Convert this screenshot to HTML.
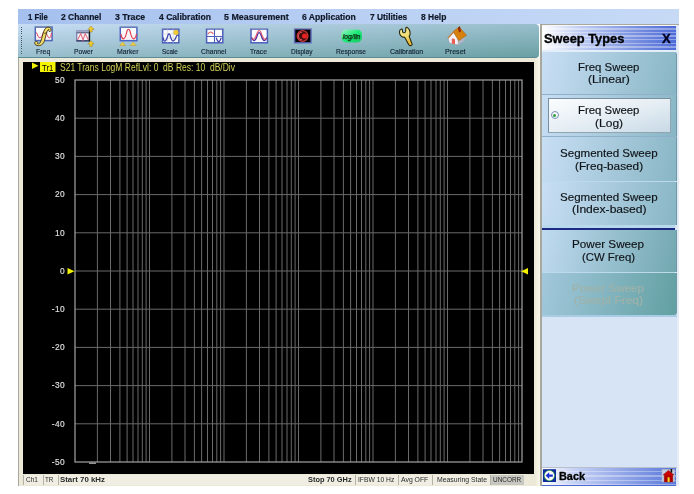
<!DOCTYPE html>
<html><head><meta charset="utf-8">
<style>
html,body{margin:0;padding:0;}
body{width:694px;height:494px;overflow:hidden;position:relative;background:#fff;font-family:"Liberation Sans",sans-serif;}
div{position:absolute;box-sizing:border-box;}
.t{white-space:nowrap;transform-origin:0 0;}
svg{position:absolute;left:0;top:0;}
</style></head><body>
<div style="left:18px;top:9px;width:661px;height:15px;background:linear-gradient(to right,#a5c0ee,#bcd2f4 60%,#c6daf6)"></div>
<div style="left:18px;top:24px;width:521px;height:34px;border-radius:0 4px 4px 0;background:linear-gradient(to bottom right,#c8ddf4,#6aa0a4);border-bottom:1px solid #5a8a94"></div>
<div style="left:20.5px;top:26.8px;width:1px;height:27px;background:repeating-linear-gradient(to bottom,#405868 0 1px,transparent 1px 2.15px)"></div>
<div style="left:18px;top:58px;width:523px;height:428px;background:#ece9d8;border-left:1px solid #a8a8a0"></div>
<div style="left:23px;top:62px;width:511px;height:412px;background:#000"></div>
<div style="left:23px;top:474px;width:511px;height:12px;background:#ece9d8"></div>
<!-- right panel -->
<div style="left:541px;top:24px;width:138px;height:462px;background:#d6e4f6"></div>
<div style="left:542px;top:26px;width:134px;height:25px;background:repeating-linear-gradient(to bottom,rgba(255,255,255,0) 0 2.2px,rgba(255,255,255,0.36) 2.2px 3.6px),linear-gradient(to right,#ffffff,#bccaf2 30%,#7890e0 70%,#4c6ad8)"></div>
<div style="left:536px;top:58px;width:4px;height:428px;background:linear-gradient(to right,#f0eddc,#f8f6ec)"></div>
<svg width="694" height="494" style="position:absolute;left:0;top:0">
<g stroke="#6a6a6a" stroke-width="1"><line x1="97.4" y1="80" x2="97.4" y2="462"/><line x1="110.5" y1="80" x2="110.5" y2="462"/><line x1="119.9" y1="80" x2="119.9" y2="462"/><line x1="127.1" y1="80" x2="127.1" y2="462"/><line x1="133.0" y1="80" x2="133.0" y2="462"/><line x1="138.0" y1="80" x2="138.0" y2="462"/><line x1="142.3" y1="80" x2="142.3" y2="462"/><line x1="146.1" y1="80" x2="146.1" y2="462"/><line x1="171.9" y1="80" x2="171.9" y2="462"/><line x1="185.0" y1="80" x2="185.0" y2="462"/><line x1="194.4" y1="80" x2="194.4" y2="462"/><line x1="201.6" y1="80" x2="201.6" y2="462"/><line x1="207.5" y1="80" x2="207.5" y2="462"/><line x1="212.5" y1="80" x2="212.5" y2="462"/><line x1="216.8" y1="80" x2="216.8" y2="462"/><line x1="220.6" y1="80" x2="220.6" y2="462"/><line x1="149.5" y1="80" x2="149.5" y2="462"/><line x1="246.4" y1="80" x2="246.4" y2="462"/><line x1="259.5" y1="80" x2="259.5" y2="462"/><line x1="268.9" y1="80" x2="268.9" y2="462"/><line x1="276.1" y1="80" x2="276.1" y2="462"/><line x1="282.0" y1="80" x2="282.0" y2="462"/><line x1="287.0" y1="80" x2="287.0" y2="462"/><line x1="291.3" y1="80" x2="291.3" y2="462"/><line x1="295.1" y1="80" x2="295.1" y2="462"/><line x1="224.0" y1="80" x2="224.0" y2="462"/><line x1="320.9" y1="80" x2="320.9" y2="462"/><line x1="334.0" y1="80" x2="334.0" y2="462"/><line x1="343.4" y1="80" x2="343.4" y2="462"/><line x1="350.6" y1="80" x2="350.6" y2="462"/><line x1="356.5" y1="80" x2="356.5" y2="462"/><line x1="361.5" y1="80" x2="361.5" y2="462"/><line x1="365.8" y1="80" x2="365.8" y2="462"/><line x1="369.6" y1="80" x2="369.6" y2="462"/><line x1="298.5" y1="80" x2="298.5" y2="462"/><line x1="395.4" y1="80" x2="395.4" y2="462"/><line x1="408.5" y1="80" x2="408.5" y2="462"/><line x1="417.9" y1="80" x2="417.9" y2="462"/><line x1="425.1" y1="80" x2="425.1" y2="462"/><line x1="431.0" y1="80" x2="431.0" y2="462"/><line x1="436.0" y1="80" x2="436.0" y2="462"/><line x1="440.3" y1="80" x2="440.3" y2="462"/><line x1="444.1" y1="80" x2="444.1" y2="462"/><line x1="373.0" y1="80" x2="373.0" y2="462"/><line x1="469.9" y1="80" x2="469.9" y2="462"/><line x1="483.0" y1="80" x2="483.0" y2="462"/><line x1="492.4" y1="80" x2="492.4" y2="462"/><line x1="499.6" y1="80" x2="499.6" y2="462"/><line x1="505.5" y1="80" x2="505.5" y2="462"/><line x1="510.5" y1="80" x2="510.5" y2="462"/><line x1="514.8" y1="80" x2="514.8" y2="462"/><line x1="518.6" y1="80" x2="518.6" y2="462"/><line x1="447.5" y1="80" x2="447.5" y2="462"/><line x1="75" y1="118.2" x2="522" y2="118.2"/><line x1="75" y1="156.4" x2="522" y2="156.4"/><line x1="75" y1="194.6" x2="522" y2="194.6"/><line x1="75" y1="232.8" x2="522" y2="232.8"/><line x1="75" y1="271.0" x2="522" y2="271.0"/><line x1="75" y1="309.2" x2="522" y2="309.2"/><line x1="75" y1="347.4" x2="522" y2="347.4"/><line x1="75" y1="385.6" x2="522" y2="385.6"/><line x1="75" y1="423.8" x2="522" y2="423.8"/></g>
<rect x="75" y="80" width="447" height="382" fill="none" stroke="#a4a4a4" stroke-width="1.2"/>
<line x1="89" y1="463.2" x2="96" y2="463.2" stroke="#9a9a9a" stroke-width="1.5"/>
<polygon points="67.5,268 74.5,271.2 67.5,274.5" fill="#f0f000"/>
<polygon points="528,268 521,271.2 528,274.5" fill="#f0f000"/>
<polygon points="32,62.5 38.5,65.7 32,69" fill="#f0f000"/>
<rect x="40" y="62" width="15.5" height="10" fill="#f4f400"/>
</svg>
<div style="left:540px;top:24px;width:2px;height:462px;background:#a9a89e"></div>
<div style="left:540px;top:23.8px;width:139px;height:1.5px;background:#a8a89c"></div>
<div style="left:542px;top:25.3px;width:135px;height:1px;background:#f4f6fa"></div>
<div style="left:677px;top:26px;width:2px;height:460px;background:#e6ecf6"></div>
<div style="left:542px;top:52px;width:135px;height:42px;border-radius:0 3px 0 0;border-right:1px solid #6d98a8;background:linear-gradient(102deg,#c8def4,#88b6c4)"></div>
<div style="left:542px;top:94px;width:133px;height:1px;background:#bcdaea"></div>
<div style="left:542px;top:95px;width:135px;height:41px;border-radius:0;border-right:1px solid #6d98a8;background:linear-gradient(102deg,#c8def4,#88b6c4)"></div>
<div style="left:542px;top:136px;width:133px;height:1px;background:#bcdaea"></div>
<div style="left:542px;top:137px;width:135px;height:44px;border-radius:0;border-right:1px solid #6d98a8;background:linear-gradient(102deg,#c8def4,#88b6c4)"></div>
<div style="left:542px;top:181px;width:133px;height:1px;background:#bcdaea"></div>
<div style="left:542px;top:182px;width:135px;height:43px;border-radius:0;border-right:1px solid #6d98a8;background:linear-gradient(102deg,#c8def4,#88b6c4)"></div>
<div style="left:542px;top:225px;width:133px;height:1px;background:#bcdaea"></div>
<div style="left:542px;top:230px;width:135px;height:42px;border-radius:0;border-right:1px solid #6d98a8;background:linear-gradient(102deg,#c0daf0,#72a8b0)"></div>
<div style="left:542px;top:272px;width:133px;height:1px;background:#bcdaea"></div>
<div style="left:542px;top:273px;width:135px;height:42px;border-radius:0 0 3px 0;border-right:1px solid #6d98a8;background:linear-gradient(102deg,#a2c8dc,#62a0a2)"></div>
<div style="left:542px;top:315px;width:133px;height:1px;background:#bcdaea"></div>
<div style="left:542px;top:94px;width:135px;height:1px;background:#8eb0c8"></div>
<div style="left:542px;top:136px;width:135px;height:1px;background:#8eb0c8"></div>
<div style="left:548px;top:98px;width:123px;height:35px;border:1px solid #90a4b2;border-top-color:#7a90a0;border-left-color:#7a90a0;background:linear-gradient(to bottom right,#fbfdff,#e6eef4 50%,#c8dae6)"></div>
<div style="left:550.6px;top:111.1px;width:8px;height:8px;border-radius:50%;border:1px solid #7890b0;background:#f4f8fc"></div>
<div style="left:553.1px;top:113.6px;width:3px;height:3px;border-radius:50%;background:#30a040"></div>
<div style="left:542px;top:225px;width:133px;height:3px;background:#b8d8ec"></div>
<div style="left:542px;top:228px;width:133px;height:2px;background:#1c2a84"></div>
<div style="left:542px;top:315px;width:135px;height:2px;background:#a8cce4"></div>
<div style="left:542px;top:50px;width:135px;height:2px;background:#e4eef8"></div>
<div style="left:542px;top:466.6px;width:135px;height:1px;background:#b8c0cc"></div>
<div style="left:542px;top:467.5px;width:134px;height:18px;background:repeating-linear-gradient(to bottom,rgba(255,255,255,0) 0 2.9px,rgba(255,255,255,0.34) 2.9px 4.3px),linear-gradient(to right,#ffffff,#c4d0f4 25%,#5a78da);border-bottom:1px solid #4a68d0"></div>
<div style="left:23px;top:475px;width:20px;height:10px;background:#f0eee2;border-left:1px solid #b4b2a2"></div>
<div style="left:43px;top:475px;width:15px;height:10px;background:#f0eee2;border-left:1px solid #b4b2a2"></div>
<div style="left:58px;top:475px;width:297px;height:10px;background:#f0eee2;border-left:1px solid #b4b2a2"></div>
<div style="left:355px;top:475px;width:43px;height:10px;background:#f0eee2;border-left:1px solid #b4b2a2"></div>
<div style="left:398px;top:475px;width:34px;height:10px;background:#f0eee2;border-left:1px solid #b4b2a2"></div>
<div style="left:432px;top:475px;width:58px;height:10px;background:#f0eee2;border-left:1px solid #b4b2a2"></div>
<div style="left:490px;top:475px;width:34px;height:10px;background:#c8c8c2;border-left:1px solid #b4b2a2"></div>
<svg width="694" height="494" style="position:absolute;left:0;top:0">
<defs>
<linearGradient id="boxg" x1="0" y1="0" x2="0" y2="1"><stop offset="0" stop-color="#ffffff"/><stop offset="1" stop-color="#f4eef4"/></linearGradient>
<linearGradient id="grn" x1="0" y1="0" x2="1" y2="1"><stop offset="0" stop-color="#9cf4c4"/><stop offset="0.5" stop-color="#1ee878"/><stop offset="1" stop-color="#18c860"/></linearGradient>
<radialGradient id="disp" cx="0.5" cy="0.5" r="0.5"><stop offset="0" stop-color="#f02020"/><stop offset="1" stop-color="#a01010"/></radialGradient>
<linearGradient id="wr" x1="0" y1="0" x2="0.4" y2="1"><stop offset="0" stop-color="#f8f0a8"/><stop offset="0.6" stop-color="#f0dc70"/><stop offset="1" stop-color="#e8b838"/></linearGradient>
</defs>
<!-- Freq -->
<rect x="35.3" y="27.1" width="16.8" height="13.5" fill="url(#boxg)" stroke="#5068b8" stroke-width="1.5"/>
<line x1="35.3" y1="27" x2="52" y2="27" stroke="#8090b0" stroke-width="1"/>
<path d="M36.5,32.5 Q38,38 40,38 Q42,38 43.5,32 M46,33 Q48,38 49.5,38 Q51,38 51.5,33" fill="none" stroke="#e04858" stroke-width="1"/>
<path d="M51,29.4 C50.8,27 47.2,26.2 45.2,28.6 C44,30 43.2,33 42.2,36.5 C41.4,39.5 40.8,42.2 39.5,43.4 C38.7,44 37.6,44 37.3,43.3 C38.2,42.8 37.8,41.2 36.2,41.3 C34.2,41.5 34,44.8 37,45.5 C40.6,46.3 43.6,44.2 44.6,40.4 C45.4,37.4 46.2,33.6 47.2,31.2 C47.8,29.8 48.6,29.2 49,29.6 C48.3,30.2 48.6,31.8 49.9,31.6 C50.8,31.4 51.1,30.4 51,29.4 Z" fill="#f2dc6a" stroke="#3a3010" stroke-width="0.9" stroke-linejoin="round"/>
<path d="M44.2,33.2 L47.2,33" stroke="#3a3010" stroke-width="0.8"/>
<!-- Power -->
<rect x="76.8" y="31" width="12.4" height="9.8" fill="#fbf6fb" stroke="#6a70a0" stroke-width="1.1"/>
<rect x="76.4" y="30.5" width="13" height="1.6" fill="#a0a8c8"/>
<rect x="76.4" y="32" width="13" height="1.4" fill="#687090"/>
<rect x="76.4" y="40.2" width="13" height="1.3" fill="#303860"/>
<path d="M77.6,40 L80.8,33.6 L83,40 L85.2,33.6 L88.4,40" fill="none" stroke="#e07080" stroke-width="1.1"/>
<line x1="89.5" y1="30.5" x2="89.5" y2="41.5" stroke="#101010" stroke-width="1.3"/>
<path d="M91,26 L94.2,29.5 L92.2,29.5 L92.2,32 L89.8,32 L89.8,29.5 L87.8,29.5 Z" fill="#f0cc30" stroke="#907010" stroke-width="0.4"/>
<path d="M91,40.8 L94.2,44 L92.2,44 L92.2,46.5 L89.8,46.5 L89.8,44 L87.8,44 Z" fill="#f0cc30" stroke="#907010" stroke-width="0.4"/>
<!-- Marker -->
<rect x="120.3" y="27.3" width="16.6" height="13.4" fill="url(#boxg)" stroke="#4a64c4" stroke-width="1.5"/>
<line x1="120" y1="27" x2="137" y2="27" stroke="#8898b8" stroke-width="1"/>
<path d="M120.8,34 Q122,39 123.5,38.8 Q125.5,38.5 127,31 Q128.3,27.5 130,31 Q131.5,38.5 133.5,38.8 Q135.5,39 136.5,34" fill="none" stroke="#e03848" stroke-width="1.2"/>
<path d="M119.6,45.6 L122.6,42 L125.6,45.6 Z M130.2,45.6 L133.2,42 L136.2,45.6 Z" fill="#f0d040" stroke="#b09020" stroke-width="0.4"/>
<!-- Scale -->
<rect x="162.6" y="29.3" width="16.2" height="13.5" fill="#fbfbff" stroke="#4a60bc" stroke-width="1.5"/>
<line x1="162" y1="28.8" x2="179.4" y2="28.8" stroke="#8898c0" stroke-width="1"/>
<path d="M167.6,29.5 V42.5 M173.2,29.5 V42.5 M162.8,33.8 H178.6 M162.8,38.2 H178.6" stroke="#d4d8e4" stroke-width="0.8"/>
<path d="M163,37.5 Q164,41.5 165,41.2 Q166.5,40.5 168,35 Q169,32.8 170,35 Q171.5,41 173,41 Q174.8,41 176.5,36 Q177.5,34 178.6,36" fill="none" stroke="#3a44a8" stroke-width="1.2"/>
<circle cx="176" cy="32.4" r="2.4" fill="#f2cc30" stroke="#c8a830" stroke-width="0.5"/>
<!-- Channel -->
<rect x="206.6" y="29" width="16.2" height="13.8" fill="#fdfdff" stroke="#4a60bc" stroke-width="1.5"/>
<line x1="206" y1="28.5" x2="223.4" y2="28.5" stroke="#8898c0" stroke-width="1"/>
<path d="M214.5,29 V42.8 M206.6,36.5 H222.8" stroke="#4a60bc" stroke-width="1.1"/>
<path d="M207.8,34.2 Q210.5,29.8 213.4,34" fill="none" stroke="#e05a5a" stroke-width="1.1"/>
<path d="M216.3,37.6 Q217.2,41.6 218.7,41.6 Q220.2,41.6 221.2,37.6" fill="none" stroke="#4040a8" stroke-width="1.2"/>
<!-- Trace -->
<rect x="251" y="29" width="16.4" height="13.8" fill="#fdfcff" stroke="#4a60bc" stroke-width="1.5"/>
<line x1="250.4" y1="28.5" x2="268" y2="28.5" stroke="#8898c0" stroke-width="1"/>
<path d="M251.6,37.4 Q253.2,41.2 254.6,40.4 Q256.4,39 257.6,34.5 Q259.2,30.8 260.8,34.5 Q262,39 263.8,40.4 Q265.2,41.2 266.8,37.4" fill="none" stroke="#5030a0" stroke-width="1.3"/>
<path d="M252,38.2 Q253.2,39.8 254.6,38.6 Q256.2,36 257.4,32.4 Q259.2,28.6 261,32.4 Q262.2,36 263.8,38.6 Q265.2,39.8 266.4,38.2" fill="none" stroke="#e05868" stroke-width="1.1"/>
<!-- Display -->
<rect x="294.6" y="29" width="16.4" height="13.8" fill="#000" stroke="#5a68b8" stroke-width="1.4"/>
<line x1="294" y1="28.5" x2="311.6" y2="28.5" stroke="#8890b8" stroke-width="1"/>
<circle cx="302.6" cy="36" r="5.4" fill="#401010" stroke="#c83838" stroke-width="1.3"/>
<path d="M302.2,32.2 A3.8,3.8 0 1 0 302.2,39.8" fill="none" stroke="#e05050" stroke-width="1.1"/>
<circle cx="304.6" cy="36" r="2.6" fill="#e82020"/>
<!-- Response -->
<rect x="341.4" y="29.6" width="20.6" height="12.8" rx="5" ry="5" fill="url(#grn)"/>
<text x="351.6" y="39" font-family="Liberation Sans" font-size="6.6" font-style="italic" fill="#082808" stroke="#082808" stroke-width="0.25" text-anchor="middle" textLength="17.5" lengthAdjust="spacingAndGlyphs">log/lin</text>
<!-- Calibration wrench -->
<path d="M400.6,29.4 C399.2,30 399,33.5 400.6,35.6 C401.6,36.8 403.4,37.4 404.8,37.4 L408.6,44.6 C409.4,46 411.6,46 412.2,44.4 L409.2,36.4 C410.6,34.6 410.8,30.6 407.6,27.6 C406.8,27 406,27.4 405.8,28.2 L405.6,31.4 C405.2,33 403.4,33.2 402.6,32 L402.4,29.8 C402.2,29 401.4,28.9 400.6,29.4 Z" fill="url(#wr)" stroke="#2a2810" stroke-width="1.1" stroke-linejoin="round"/>
<!-- Preset house -->
<path d="M448,37.6 L453.2,32 L458.2,38 L458,45 L449.4,43 Z" fill="#f4f2fa" stroke="#9090a0" stroke-width="0.5"/>
<path d="M458.2,38.5 L464.6,35.8 L464.2,41.2 L458,45 Z" fill="#b0b4c0"/>
<path d="M453.2,31.5 L459.2,27 L466.6,35.2 L458.6,40.8 Z" fill="#d8800c" stroke="#a05808" stroke-width="0.5"/>
<path d="M447.5,37.8 L453.2,31.5 L454,32.5 L448.5,38.5 Z" fill="#c8782a"/>
<path d="M457.8,27.6 L460,26.2 L461,31.5 L459,32.6 Z" fill="#902808"/>
<path d="M451.8,38.2 L455,39.2 L455,44.2 L451.8,43.4 Z" fill="#e86050"/>
<!-- Back icon -->
<rect x="542.9" y="469.2" width="13.1" height="12.8" fill="#0c2a9c"/>
<circle cx="549.4" cy="475.6" r="5.6" fill="#3a9a50"/>
<circle cx="549.4" cy="475.6" r="4.8" fill="#ffffff"/>
<path d="M545.6,475.6 L549.2,472.2 L549.2,474.4 L552.8,474.4 L552.8,476.8 L549.2,476.8 L549.2,479 Z" fill="#1a30d0"/>
<!-- Home icon -->
<rect x="661.9" y="469.3" width="12.9" height="12.6" fill="#c4cce0" stroke="#a0a8b8" stroke-width="0.5"/>
<path d="M668.5,470.3 L674,474.9 L672.7,474.9 L672.7,481.9 L664.3,481.9 L664.3,474.9 L663,474.9 Z" fill="#cc0000" stroke="#801010" stroke-width="0.4"/>
<path d="M664.3,475.6 L672.7,475.6 L672.7,481.9 L664.3,481.9 Z" fill="#900000" opacity="0.45"/>
<rect x="670.6" y="469" width="1.6" height="3.6" fill="#101010"/>
<rect x="667.6" y="477.3" width="2" height="4.6" fill="#f0e020"/>
</svg>
<div style="left:0;top:0;width:694px;height:494px;will-change:transform"><div class="t" style="left:27.50px;top:12.89px;font-size:8.4px;line-height:8.4px;font-weight:bold;color:#101828;transform:scaleX(0.9243);-webkit-text-stroke:0.2px #101828">1 File</div>
<div class="t" style="left:60.80px;top:12.89px;font-size:8.4px;line-height:8.4px;font-weight:bold;color:#101828;transform:scaleX(1.0092);-webkit-text-stroke:0.2px #101828">2 Channel</div>
<div class="t" style="left:114.70px;top:12.89px;font-size:8.4px;line-height:8.4px;font-weight:bold;color:#101828;transform:scaleX(1.0424);-webkit-text-stroke:0.2px #101828">3 Trace</div>
<div class="t" style="left:158.60px;top:12.89px;font-size:8.4px;line-height:8.4px;font-weight:bold;color:#101828;transform:scaleX(1.0230);-webkit-text-stroke:0.2px #101828">4 Calibration</div>
<div class="t" style="left:223.80px;top:12.89px;font-size:8.4px;line-height:8.4px;font-weight:bold;color:#101828;transform:scaleX(1.0609);-webkit-text-stroke:0.2px #101828">5 Measurement</div>
<div class="t" style="left:302.40px;top:12.89px;font-size:8.4px;line-height:8.4px;font-weight:bold;color:#101828;transform:scaleX(1.0290);-webkit-text-stroke:0.2px #101828">6 Application</div>
<div class="t" style="left:370.00px;top:12.89px;font-size:8.4px;line-height:8.4px;font-weight:bold;color:#101828;transform:scaleX(0.9991);-webkit-text-stroke:0.2px #101828">7 Utilities</div>
<div class="t" style="left:420.70px;top:12.89px;font-size:8.4px;line-height:8.4px;font-weight:bold;color:#101828;transform:scaleX(1.0103);-webkit-text-stroke:0.2px #101828">8 Help</div>
<div class="t" style="left:36.00px;top:47.63px;font-size:8.0px;line-height:8.0px;font-weight:normal;color:#102030;transform:scaleX(0.8691);-webkit-text-stroke:0.15px #102030">Freq</div>
<div class="t" style="left:74.00px;top:47.63px;font-size:8.0px;line-height:8.0px;font-weight:normal;color:#102030;transform:scaleX(0.8375);-webkit-text-stroke:0.15px #102030">Power</div>
<div class="t" style="left:116.60px;top:47.63px;font-size:8.0px;line-height:8.0px;font-weight:normal;color:#102030;transform:scaleX(0.8638);-webkit-text-stroke:0.15px #102030">Marker</div>
<div class="t" style="left:161.50px;top:47.63px;font-size:8.0px;line-height:8.0px;font-weight:normal;color:#102030;transform:scaleX(0.7944);-webkit-text-stroke:0.15px #102030">Scale</div>
<div class="t" style="left:200.90px;top:47.63px;font-size:8.0px;line-height:8.0px;font-weight:normal;color:#102030;transform:scaleX(0.8453);-webkit-text-stroke:0.15px #102030">Channel</div>
<div class="t" style="left:250.30px;top:47.63px;font-size:8.0px;line-height:8.0px;font-weight:normal;color:#102030;transform:scaleX(0.8384);-webkit-text-stroke:0.15px #102030">Trace</div>
<div class="t" style="left:290.60px;top:47.63px;font-size:8.0px;line-height:8.0px;font-weight:normal;color:#102030;transform:scaleX(0.8195);-webkit-text-stroke:0.15px #102030">Display</div>
<div class="t" style="left:335.50px;top:47.63px;font-size:8.0px;line-height:8.0px;font-weight:normal;color:#102030;transform:scaleX(0.8326);-webkit-text-stroke:0.15px #102030">Response</div>
<div class="t" style="left:389.60px;top:47.63px;font-size:8.0px;line-height:8.0px;font-weight:normal;color:#102030;transform:scaleX(0.8680);-webkit-text-stroke:0.15px #102030">Calibration</div>
<div class="t" style="left:445.20px;top:47.63px;font-size:8.0px;line-height:8.0px;font-weight:normal;color:#102030;transform:scaleX(0.8908);-webkit-text-stroke:0.15px #102030">Preset</div>
<div class="t" style="left:42.00px;top:63.07px;font-size:9.6px;line-height:9.6px;font-weight:normal;color:#000;transform:scaleX(0.7973)">Tr1</div>
<div class="t" style="left:59.60px;top:62.67px;font-size:10.2px;line-height:10.2px;font-weight:normal;color:#d2d258;transform:scaleX(0.8353)">S21 Trans LogM RefLvl: 0&nbsp; dB Res: 10&nbsp; dB/Div</div>
<div class="t" style="left:54.88px;top:75.89px;font-size:8.4px;line-height:8.4px;font-weight:normal;color:#e4e4e4;transform:scaleX(1.0000);-webkit-text-stroke:0.12px #e4e4e4;letter-spacing:0.4px">50</div>
<div class="t" style="left:54.88px;top:114.09px;font-size:8.4px;line-height:8.4px;font-weight:normal;color:#e4e4e4;transform:scaleX(1.0000);-webkit-text-stroke:0.12px #e4e4e4;letter-spacing:0.4px">40</div>
<div class="t" style="left:54.88px;top:152.29px;font-size:8.4px;line-height:8.4px;font-weight:normal;color:#e4e4e4;transform:scaleX(1.0000);-webkit-text-stroke:0.12px #e4e4e4;letter-spacing:0.4px">30</div>
<div class="t" style="left:54.88px;top:190.49px;font-size:8.4px;line-height:8.4px;font-weight:normal;color:#e4e4e4;transform:scaleX(1.0000);-webkit-text-stroke:0.12px #e4e4e4;letter-spacing:0.4px">20</div>
<div class="t" style="left:54.88px;top:228.69px;font-size:8.4px;line-height:8.4px;font-weight:normal;color:#e4e4e4;transform:scaleX(1.0000);-webkit-text-stroke:0.12px #e4e4e4;letter-spacing:0.4px">10</div>
<div class="t" style="left:59.94px;top:266.89px;font-size:8.4px;line-height:8.4px;font-weight:normal;color:#e4e4e4;transform:scaleX(1.0000);-webkit-text-stroke:0.12px #e4e4e4;letter-spacing:0.4px">0</div>
<div class="t" style="left:51.69px;top:305.09px;font-size:8.4px;line-height:8.4px;font-weight:normal;color:#e4e4e4;transform:scaleX(1.0000);-webkit-text-stroke:0.12px #e4e4e4;letter-spacing:0.4px">-10</div>
<div class="t" style="left:51.69px;top:343.29px;font-size:8.4px;line-height:8.4px;font-weight:normal;color:#e4e4e4;transform:scaleX(1.0000);-webkit-text-stroke:0.12px #e4e4e4;letter-spacing:0.4px">-20</div>
<div class="t" style="left:51.69px;top:381.49px;font-size:8.4px;line-height:8.4px;font-weight:normal;color:#e4e4e4;transform:scaleX(1.0000);-webkit-text-stroke:0.12px #e4e4e4;letter-spacing:0.4px">-30</div>
<div class="t" style="left:51.69px;top:419.69px;font-size:8.4px;line-height:8.4px;font-weight:normal;color:#e4e4e4;transform:scaleX(1.0000);-webkit-text-stroke:0.12px #e4e4e4;letter-spacing:0.4px">-40</div>
<div class="t" style="left:51.69px;top:457.89px;font-size:8.4px;line-height:8.4px;font-weight:normal;color:#e4e4e4;transform:scaleX(1.0000);-webkit-text-stroke:0.12px #e4e4e4;letter-spacing:0.4px">-50</div>
<div class="t" style="left:543.90px;top:33.00px;font-size:12.4px;line-height:12.4px;font-weight:bold;color:#000;transform:scaleX(1.0349);-webkit-text-stroke:0.35px #000">Sweep Types</div>
<div class="t" style="left:662.30px;top:33.00px;font-size:12.4px;line-height:12.4px;font-weight:bold;color:#000020;transform:scaleX(1.0526);-webkit-text-stroke:0.35px #000020">X</div>
<div class="t" style="left:577.90px;top:62.87px;font-size:10.2px;line-height:10.2px;font-weight:normal;color:#101418;transform:scaleX(1.1176);-webkit-text-stroke:0.15px #101418">Freq Sweep</div>
<div class="t" style="left:588.20px;top:75.27px;font-size:10.2px;line-height:10.2px;font-weight:normal;color:#101418;transform:scaleX(1.1934);-webkit-text-stroke:0.15px #101418">(Linear)</div>
<div class="t" style="left:577.90px;top:106.17px;font-size:10.2px;line-height:10.2px;font-weight:normal;color:#101418;transform:scaleX(1.1176);-webkit-text-stroke:0.15px #101418">Freq Sweep</div>
<div class="t" style="left:595.10px;top:118.57px;font-size:10.2px;line-height:10.2px;font-weight:normal;color:#101418;transform:scaleX(1.1808);-webkit-text-stroke:0.15px #101418">(Log)</div>
<div class="t" style="left:559.90px;top:149.47px;font-size:10.2px;line-height:10.2px;font-weight:normal;color:#101418;transform:scaleX(1.1336);-webkit-text-stroke:0.15px #101418">Segmented Sweep</div>
<div class="t" style="left:575.00px;top:161.87px;font-size:10.2px;line-height:10.2px;font-weight:normal;color:#101418;transform:scaleX(1.1564);-webkit-text-stroke:0.15px #101418">(Freq-based)</div>
<div class="t" style="left:559.90px;top:192.97px;font-size:10.2px;line-height:10.2px;font-weight:normal;color:#101418;transform:scaleX(1.1336);-webkit-text-stroke:0.15px #101418">Segmented Sweep</div>
<div class="t" style="left:571.70px;top:205.37px;font-size:10.2px;line-height:10.2px;font-weight:normal;color:#101418;transform:scaleX(1.1868);-webkit-text-stroke:0.15px #101418">(Index-based)</div>
<div class="t" style="left:572.40px;top:240.27px;font-size:10.2px;line-height:10.2px;font-weight:normal;color:#101418;transform:scaleX(1.1470);-webkit-text-stroke:0.15px #101418">Power Sweep</div>
<div class="t" style="left:582.20px;top:252.67px;font-size:10.2px;line-height:10.2px;font-weight:normal;color:#101418;transform:scaleX(1.1147);-webkit-text-stroke:0.15px #101418">(CW Freq)</div>
<div class="t" style="left:572.40px;top:283.67px;font-size:10.2px;line-height:10.2px;font-weight:normal;color:#a0b2a8;transform:scaleX(1.1470);-webkit-text-stroke:0.15px #a0b2a8">Power Sweep</div>
<div class="t" style="left:574.00px;top:296.07px;font-size:10.2px;line-height:10.2px;font-weight:normal;color:#a0b2a8;transform:scaleX(1.1717);-webkit-text-stroke:0.15px #a0b2a8">(Swept Freq)</div>
<div class="t" style="left:558.80px;top:472.10px;font-size:10.4px;line-height:10.4px;font-weight:bold;color:#000;transform:scaleX(1.0465);-webkit-text-stroke:0.3px #000">Back</div>
<div class="t" style="left:26.00px;top:475.73px;font-size:8.0px;line-height:8.0px;font-weight:normal;color:#282828;transform:scaleX(0.8102)">Ch1</div>
<div class="t" style="left:45.20px;top:475.73px;font-size:8.0px;line-height:8.0px;font-weight:normal;color:#282828;transform:scaleX(0.7871)">TR</div>
<div class="t" style="left:60.00px;top:475.73px;font-size:8.0px;line-height:8.0px;font-weight:bold;color:#282828;transform:scaleX(0.9804)">Start 70 kHz</div>
<div class="t" style="left:308.30px;top:475.73px;font-size:8.0px;line-height:8.0px;font-weight:bold;color:#282828;transform:scaleX(0.9252)">Stop 70 GHz</div>
<div class="t" style="left:357.90px;top:475.73px;font-size:8.0px;line-height:8.0px;font-weight:normal;color:#282828;transform:scaleX(0.8417)">IFBW 10 Hz</div>
<div class="t" style="left:401.20px;top:475.73px;font-size:8.0px;line-height:8.0px;font-weight:normal;color:#282828;transform:scaleX(0.8569)">Avg OFF</div>
<div class="t" style="left:436.80px;top:475.73px;font-size:8.0px;line-height:8.0px;font-weight:normal;color:#282828;transform:scaleX(0.8581)">Measuring State</div>
<div class="t" style="left:492.70px;top:475.73px;font-size:8.0px;line-height:8.0px;font-weight:normal;color:#282828;transform:scaleX(0.8032)">UNCORR</div></div>
</body></html>
